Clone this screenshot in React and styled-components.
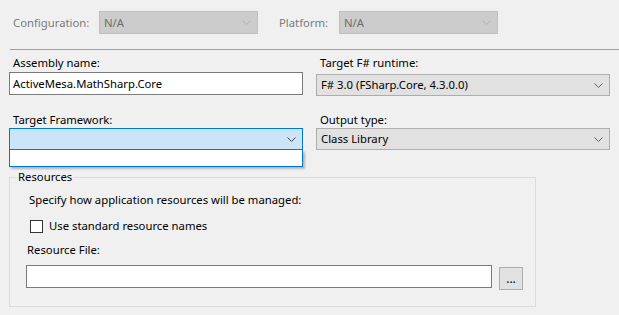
import React from "react";
import styled, { createGlobalStyle } from "styled-components";

const GlobalStyle = createGlobalStyle`
  html, body {
    margin: 0;
    padding: 0;
    background: #f0f0f0;
  }
  body {
    font-family: "Noto Sans", "Segoe UI", sans-serif;
    font-size: 11.3px;
    color: #000;
  }
`;

const Page = styled.div`
  width: 619px;
  height: 315px;
  overflow: hidden;
  background: #f0f0f0;
`;

const TopBar = styled.div`
  display: flex;
  align-items: center;
  padding: 11px 0 0 13px;
  height: 23px;
`;

const DimLabel = styled.span`
  color: #7a7a7a;
  line-height: 16px;
  width: ${(p) => p.width}px;
  margin-left: ${(p) => p.offset || 0}px;
`;

const Rule = styled.div`
  margin: 15px 0 0 10px;
  height: 1px;
  background: #a0a0a0;
`;

const Fields = styled.div`
  display: grid;
  grid-template-columns: 294px 294px;
  column-gap: 13px;
  row-gap: 16px;
  padding-left: 9px;
  margin-top: 5px;
`;

const Field = styled.div`
  display: flex;
  flex-direction: column;
`;

const Anchor = styled.div`
  position: relative;
`;

const Label = styled.label`
  display: block;
  line-height: 16px;
  padding-left: 4px;
  margin-bottom: ${(p) => p.gap || 0}px;
`;

const TextBox = styled.div`
  box-sizing: border-box;
  flex-shrink: 0;
  height: 23px;
  width: ${(p) => (p.width ? `${p.width}px` : "100%")};
  background: #fff;
  border: 1px solid #7a7a7a;
  padding: 0 3px;
  display: flex;
  align-items: center;
  line-height: 16px;
  white-space: nowrap;
`;

const ComboBox = styled.div`
  box-sizing: border-box;
  height: ${(p) => p.h || 22}px;
  width: ${(p) => (p.width ? `${p.width}px` : "100%")};
  display: flex;
  align-items: center;
  justify-content: space-between;
  padding: 0 6px 0 4px;
  line-height: 16px;
  background: ${(p) =>
    p.disabled ? "#cccccc" : p.focused ? "#cce4f7" : "#e1e1e1"};
  border: 1px solid
    ${(p) => (p.disabled ? "#bfbfbf" : p.focused ? "#0078d7" : "#adadad")};
  color: ${(p) => (p.disabled ? "#6d6d6d" : "#000")};
`;

const Chevron = ({ color }) => (
  <svg width="9" height="5" viewBox="0 0 9 5">
    <path d="M0.5 0.5 L4.5 4.5 L8.5 0.5" fill="none" stroke={color} strokeWidth="1" />
  </svg>
);

const DropList = styled.div`
  position: absolute;
  left: 0;
  right: 0;
  top: 100%;
  height: 17px;
  box-sizing: border-box;
  background: #fff;
  border: 1px solid #0078d7;
  border-top: none;
  box-shadow: 2px 2px 2px rgba(0, 0, 0, 0.25);
  z-index: 2;
`;

const Group = styled.fieldset`
  box-sizing: border-box;
  width: 527px;
  margin: 19px 0 0 9px;
  padding: 7px 11px 16px 19px;
  border: 1px solid #dcdcdc;
  min-width: 0;
`;

const Legend = styled.legend`
  padding: 0 1px;
  margin-left: -12px;
  line-height: 16px;
`;

const Text = styled.div`
  line-height: 16px;
  margin-top: ${(p) => p.top || 0}px;
  margin-left: ${(p) => p.shift || 0}px;
`;

const CheckRow = styled.label`
  display: flex;
  align-items: center;
  margin-top: 10px;
  padding-left: 1px;
  line-height: 16px;
`;

const CheckBox = styled.span`
  box-sizing: border-box;
  width: 13px;
  height: 13px;
  border: 1px solid #333;
  background: #fff;
  margin-right: 6px;
`;

const FileRow = styled.div`
  display: flex;
  align-items: flex-start;
  gap: 7px;
  margin-top: 7px;
  margin-left: -3px;
`;

const BrowseButton = styled.button`
  box-sizing: border-box;
  flex-shrink: 0;
  width: 24px;
  height: 23px;
  margin-top: 2px;
  padding: 0;
  background: #e1e1e1;
  border: 1px solid #adadad;
  font-family: inherit;
  font-size: 12px;
  line-height: 14px;
  color: #000;
`;

export default function App() {
  return (
    <Page>
      <GlobalStyle />
      <TopBar>
        <DimLabel width={86}>Configuration:</DimLabel>
        <ComboBox disabled width={159} h={23}>
          N/A
          <Chevron color="#b0b0b0" />
        </ComboBox>
        <DimLabel width={60} offset={21}>Platform:</DimLabel>
        <ComboBox disabled width={159} h={23}>
          N/A
          <Chevron color="#b0b0b0" />
        </ComboBox>
      </TopBar>
      <Rule />
      <Fields>
        <Field>
          <Label gap={1}>Assembly name:</Label>
          <TextBox>ActiveMesa.MathSharp.Core</TextBox>
        </Field>
        <Field>
          <Label gap={3}>Target F# runtime:</Label>
          <ComboBox>
            F# 3.0 (FSharp.Core, 4.3.0.0)
            <Chevron color="#606060" />
          </ComboBox>
        </Field>
        <Field>
          <Label>Target Framework:</Label>
          <Anchor>
            <ComboBox focused>
              <span />
              <Chevron color="#404040" />
            </ComboBox>
            <DropList />
          </Anchor>
        </Field>
        <Field>
          <Label>Output type:</Label>
          <ComboBox>
            Class Library
            <Chevron color="#606060" />
          </ComboBox>
        </Field>
      </Fields>
      <Group>
        <Legend>Resources</Legend>
        <Text>Specify how application resources will be managed:</Text>
        <CheckRow>
          <CheckBox />
          Use standard resource names
        </CheckRow>
        <Text top={8} shift={-2}>Resource File:</Text>
        <FileRow>
          <TextBox width={466} />
          <BrowseButton>...</BrowseButton>
        </FileRow>
      </Group>
    </Page>
  );
}
